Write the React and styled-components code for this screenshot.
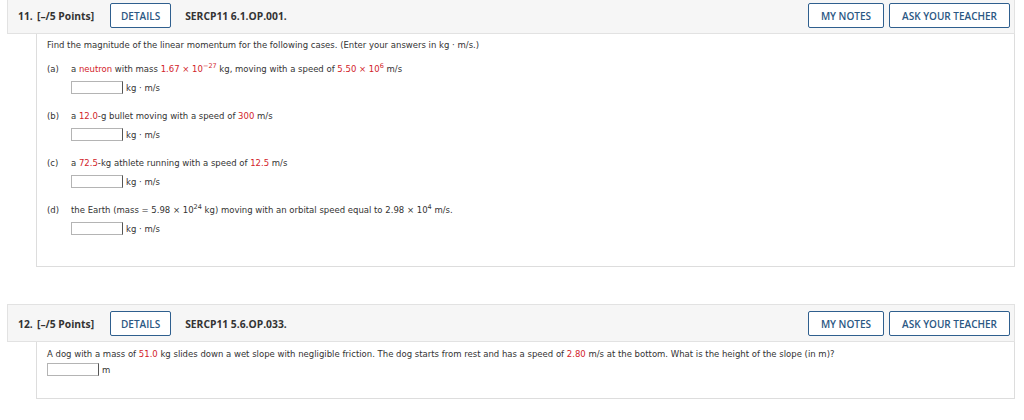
import React from 'react';
import styled, {createGlobalStyle} from 'styled-components';

const GlobalStyle = createGlobalStyle`
  body {
    margin: 0;
    background: #fff;
    font-family: "DejaVu Sans", Verdana, sans-serif;
    color: #333;
  }
`

const Page = styled.div`
  width: 1008px;
  padding-left: 7px;
  margin-top: -4px;
  display: flex;
  flex-direction: column;
  gap: 37px;
`

const Question = styled.section`
  display: flex;
  flex-direction: column;
`

const Header = styled.div`
  display: flex;
  align-items: center;
  height: 25px;
  padding: 6px 4px 5px 10px;
  background: #f6f6f6;
  border: 1px solid #e2e2e2;
  font-family: "Open Sans", sans-serif;
  font-size: 10.3px;
  font-weight: 700;
  color: #333;
`

const Number = styled.span`
  width: 19px;
`

const Points = styled.span`
  width: 73px;
`

const Title = styled.span`
  margin-left: 14px;
  flex: 1;
`

const Button = styled.button`
  height: 25px;
  padding: 0 ${p => p.$pad || 12}px;
  margin-left: ${p => p.$gap || 0}px;
  background: #fff;
  border: 1px solid #2f5f8e;
  border-radius: 2px;
  font-family: "Open Sans", sans-serif;
  font-size: 10px;
  font-weight: 600;
  color: #2b5783;
`

const Body = styled.div`
  margin-left: 29px;
  height: ${p => p.$h}px;
  box-sizing: border-box;
  border: 1px solid #ddd;
  border-top: none;
  padding: ${p => p.$top}px 10px 0 10px;
  font-size: 8.5px;
  line-height: 12px;
`

const Lead = styled.p`
  margin: 0 0 12px 0;
`

const Part = styled.div`
  display: grid;
  grid-template-columns: 24px 1fr;
  margin-bottom: 16px;
`

const Label = styled.span``

const Answer = styled.div`
  grid-column: 2;
  display: flex;
  align-items: center;
  gap: 3px;
  margin-top: ${p => p.$mt || 6}px;
`

const Box = styled.span`
  display: inline-block;
  width: 50px;
  height: 11px;
  background: #fff;
  border: 1px solid #b4b4b4;
  border-right-color: #555;
`

const Red = styled.span`
  color: #d2232a;
`

const Sup = styled.sup`
  font-size: 6.5px;
  line-height: 0;
  vertical-align: 4px;
`

const Unit = styled.span``

function QuestionHeader({num, code}) {
    return (
        <Header>
            <Number>{num}.</Number>
            <Points>[–/5 Points]</Points>
            <Button $pad={10}>DETAILS</Button>
            <Title>{code}</Title>
            <Button>MY NOTES</Button>
            <Button $gap={5}>ASK YOUR TEACHER</Button>
        </Header>
    );
}

export default function App() {
    return (
        <Page>
            <GlobalStyle/>
            <Question>
                <QuestionHeader num="11" code="SERCP11 6.1.OP.001."/>
                <Body $h={233} $top={5}>
                    <Lead>Find the magnitude of the linear momentum for the following cases. (Enter your answers in kg · m/s.)</Lead>
                    <Part>
                        <Label>(a)</Label>
                        <span>a <Red>neutron</Red> with mass <Red>1.67 × 10<Sup>−27</Sup></Red> kg, moving with a speed of <Red>5.50 × 10<Sup>6</Sup></Red> m/s</span>
                        <Answer><Box/><Unit>kg · m/s</Unit></Answer>
                    </Part>
                    <Part>
                        <Label>(b)</Label>
                        <span>a <Red>12.0</Red>-g bullet moving with a speed of <Red>300</Red> m/s</span>
                        <Answer><Box/><Unit>kg · m/s</Unit></Answer>
                    </Part>
                    <Part>
                        <Label>(c)</Label>
                        <span>a <Red>72.5</Red>-kg athlete running with a speed of <Red>12.5</Red> m/s</span>
                        <Answer><Box/><Unit>kg · m/s</Unit></Answer>
                    </Part>
                    <Part>
                        <Label>(d)</Label>
                        <span>the Earth (mass = 5.98 × 10<Sup>24</Sup> kg) moving with an orbital speed equal to 2.98 × 10<Sup>4</Sup> m/s.</span>
                        <Answer><Box/><Unit>kg · m/s</Unit></Answer>
                    </Part>
                </Body>
            </Question>
            <Question>
                <QuestionHeader num="12" code="SERCP11 5.6.OP.033."/>
                <Body $h={57} $top={6}>
                    A dog with a mass of <Red>51.0</Red> kg slides down a wet slope with negligible friction. The dog starts from rest and has a speed of <Red>2.80</Red> m/s at the bottom. What is the height of the slope (in m)?
                    <Answer $mt={3}><Box/><Unit>m</Unit></Answer>
                </Body>
            </Question>
        </Page>
    );
}
